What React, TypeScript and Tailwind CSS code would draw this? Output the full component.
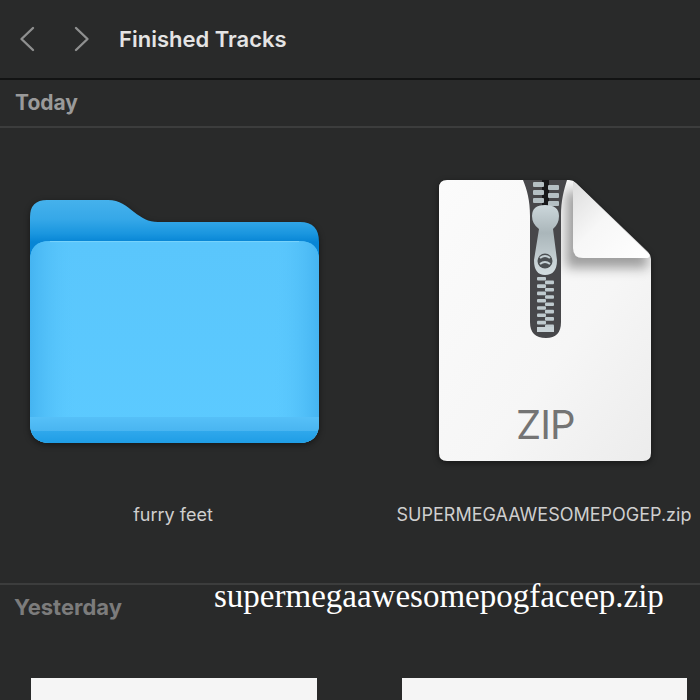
const sans = 'font-["Inter","Liberation_Sans",sans-serif]';

const Chevron = ({ flip }: { flip?: boolean }) => (
  <svg width="16" height="26" viewBox="0 0 16 26" fill="none" className={flip ? 'rotate-180' : ''}>
    <path d="M14 2 L2.5 13 L14 24" stroke="#8f9090" strokeWidth="2.4" strokeLinecap="round" strokeLinejoin="round" />
  </svg>
);

const frontShape = 'M30 262 Q30 242 50 242 L299 242 Q319 242 319 262 L319 424 Q319 444 299 444 L50 444 Q30 444 30 424 Z';

const FolderIcon = () => (
  <svg width="292" height="250" viewBox="29 198 292 250" className="drop-shadow-[0_2px_3px_rgba(0,0,0,0.45)]">
    <defs>
      <linearGradient id="folderBack" x1="0" y1="201" x2="0" y2="243" gradientUnits="userSpaceOnUse">
        <stop offset="0" stopColor="#45b1ec" />
        <stop offset="0.45" stopColor="#36a8e8" />
        <stop offset="0.8" stopColor="#1a96df" />
        <stop offset="1" stopColor="#0785d5" />
      </linearGradient>
      <linearGradient id="folderFront" x1="0" y1="0" x2="0" y2="1">
        <stop offset="0" stopColor="#5ac6fc" />
        <stop offset="1" stopColor="#5ccaff" />
      </linearGradient>
      <linearGradient id="folderSide" x1="0" y1="0" x2="1" y2="0">
        <stop offset="0" stopColor="#45b4f1" />
        <stop offset="0.16" stopColor="#5ac8fe" stopOpacity="0" />
        <stop offset="0.84" stopColor="#5ac8fe" stopOpacity="0" />
        <stop offset="1" stopColor="#45b4f1" />
      </linearGradient>
      <linearGradient id="folderBand" x1="0" y1="0" x2="0" y2="1">
        <stop offset="0" stopColor="#56c0f8" />
        <stop offset="1" stopColor="#49b5f1" />
      </linearGradient>
      <linearGradient id="folderFoot" x1="0" y1="0" x2="0" y2="1">
        <stop offset="0" stopColor="#2fa8ec" />
        <stop offset="1" stopColor="#1f9de5" />
      </linearGradient>
      <clipPath id="frontClip">
        <path d={frontShape} />
      </clipPath>
    </defs>
    <path
      d="M30 218 Q30 201 47 201 L108 201 C120 201 126 207 134 213 C142 219 148 223 158 223 L300 223 Q319 223 319 243 L319 290 L30 290 Z"
      fill="url(#folderBack)"
    />
    <path d={frontShape} fill="url(#folderFront)" />
    <path d={frontShape} fill="url(#folderSide)" />
    <g clipPath="url(#frontClip)">
      <rect x="30" y="418" width="289" height="14" fill="url(#folderBand)" />
      <rect x="30" y="432" width="289" height="12" fill="url(#folderFoot)" />
    </g>
    <path d="M50 242.6 L299 242.6" stroke="#7ad3fb" strokeWidth="1" />
  </svg>
);

const teeth = [277, 284.3, 291.6, 298.9, 306.2, 313.5, 320.8];

const paperShape =
  'M447 180 L569 180 Q573 180 576 183 L648 252 Q651 255 651 259 L651 453 Q651 461 643 461 L447 461 Q439 461 439 453 L439 188 Q439 180 447 180 Z';

const ZipIcon = () => (
  <div className="relative w-[240px] h-[300px]">
    <svg width="240" height="300" viewBox="425 172 240 300" className="drop-shadow-[0_2px_3px_rgba(0,0,0,0.45)]">
      <defs>
        <linearGradient id="paper" x1="0" y1="0" x2="1" y2="1">
          <stop offset="0" stopColor="#fbfbfb" />
          <stop offset="0.6" stopColor="#f6f6f6" />
          <stop offset="1" stopColor="#ececec" />
        </linearGradient>
        <linearGradient id="fold" x1="0" y1="0" x2="1" y2="1">
          <stop offset="0" stopColor="#dcdcdc" />
          <stop offset="0.45" stopColor="#f7f7f7" />
          <stop offset="1" stopColor="#ffffff" />
        </linearGradient>
        <linearGradient id="slider" x1="0" y1="0" x2="0" y2="1">
          <stop offset="0" stopColor="#ccd7db" />
          <stop offset="0.4" stopColor="#aab6ba" />
          <stop offset="1" stopColor="#d3dde0" />
        </linearGradient>
        <filter id="soft" x="-30%" y="-30%" width="160%" height="160%">
          <feGaussianBlur stdDeviation="6" />
        </filter>
        <clipPath id="paperClip">
          <path d={paperShape} />
        </clipPath>
      </defs>
      <path d={paperShape} fill="url(#paper)" />
      <g clipPath="url(#paperClip)">
        <path d="M566 190 L566 268 L648 268 L648 254 L574 190 Z" fill="#000000" fillOpacity="0.36" filter="url(#soft)" />
      </g>
      <path d="M573 181 L649 254 Q651 258 646 258 L583 258 Q573 258 573 248 Z" fill="url(#fold)" />
      <path
        d="M523 180 L567 180 C564 190 561 200 561 216 L561 322 Q561 338 546 338 Q530 338 530 322 L530 216 C530 200 527 190 523 180 Z"
        fill="#47474a"
      />
      <path d="M542 180 L549 180 L549 206 L542 206 Z" fill="#17181a" />
      {[182, 190, 198].map((y) => (
        <g key={y} fill="#b4bfc3">
          <rect x="533" y={y} width="11" height="5" rx="1" />
          <rect x="548" y={y + 3} width="11" height="5" rx="1" />
        </g>
      ))}
      {teeth.map((y) => (
        <g key={y} fill="#bfcace">
          <rect x="537" y={y} width="9" height="3.6" rx="1" />
          <rect x="545" y={y + 3.6} width="9" height="3.6" rx="1" />
        </g>
      ))}
      <rect x="537" y="327" width="17" height="5" fill="#c8d2d6" />
      <path
        d="M532 216 Q532 205 545 205 Q559 205 559 216 Q559 224 553 229 L557 260 Q557 275 545 275 Q534 275 534 260 L539 229 Q532 224 532 216 Z"
        fill="url(#slider)"
      />
      <circle cx="545" cy="261" r="7.5" fill="#4b4f52" />
      <path d="M540 258 Q545 254 550 258 M540 264 Q545 260 550 264" stroke="#c5d0d4" strokeWidth="2" fill="none" />
    </svg>
    <span className={`absolute left-[91px] top-[231px] text-[40px] leading-[44px] tracking-[-1px] text-[#747474] ${sans}`}>
      ZIP
    </span>
  </div>
);

export default function App() {
  return (
    <div className={`relative w-[700px] h-[700px] overflow-hidden bg-[#292a2a] flex flex-col ${sans}`}>
      <header className="h-[80px] shrink-0 flex items-center pl-[19px] border-b-2 border-[#121313]">
        <Chevron />
        <div className="ml-[39px]">
          <Chevron flip />
        </div>
        <h1 className="ml-[29px] text-[22px] font-semibold text-[#e4e4e4]">Finished Tracks</h1>
      </header>

      <div className="h-[48px] shrink-0 flex items-center pl-[15px] border-b-2 border-[#3c3d3d]">
        <span className="text-[21px] font-bold text-[#9a9a9a]">Today</span>
      </div>

      <section className="h-[457px] shrink-0 border-b-2 border-[#3c3d3d] pt-[44px] pl-[29px] grid grid-cols-[292px_300px] gap-x-[74px] content-start">
        <div className="flex flex-col items-center">
          <div className="h-[300px] flex items-center justify-center">
            <FolderIcon />
          </div>
          <span className="mt-[31px] pr-1 text-[18px] leading-6 text-[#cfcfcf]">furry feet</span>
        </div>
        <div className="flex flex-col items-center">
          <ZipIcon />
          <span className="mt-[31px] pr-0.5 text-[18px] leading-6 whitespace-nowrap text-[#cfcfcf]">
            SUPERMEGAAWESOMEPOGEP.zip
          </span>
        </div>
      </section>

      <div className="h-[44px] shrink-0 flex items-center pl-[14px]">
        <span className="text-[22px] font-bold text-[#7c7c7c]">Yesterday</span>
      </div>

      <div className="mt-[49px] pl-[31px] flex gap-x-[85px] flex-1">
        <div className="w-[286px] bg-[#f5f5f5]" />
        <div className="w-[285px] bg-[#f5f5f5]" />
      </div>

      <span className="absolute left-[214px] top-[577px] text-[33px] leading-[38px] text-white font-['Liberation_Serif',serif]">
        supermegaawesomepogfaceep.zip
      </span>
    </div>
  );
}
